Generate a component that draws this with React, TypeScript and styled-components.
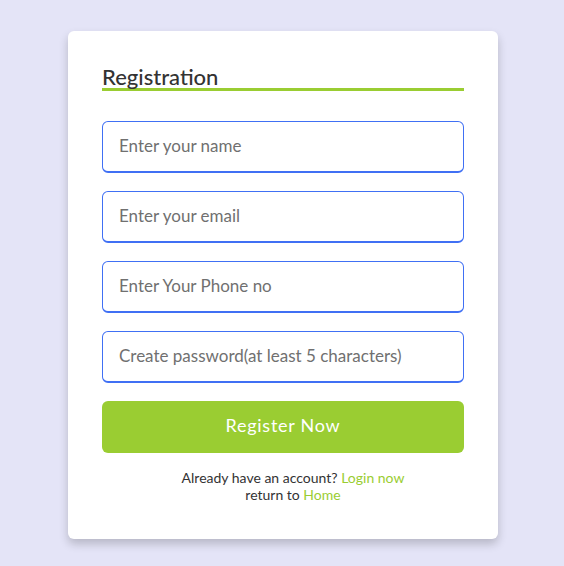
import React from "react";
import styled, { createGlobalStyle } from "styled-components";

const Global = createGlobalStyle`
  * { box-sizing: border-box; margin: 0; padding: 0; }
  html, body { background: #e4e4f7; }
  body { font-family: Lato, "Noto Sans", sans-serif; min-height: 566px; }
`;

const Page = styled.div`
  display: flex;
  justify-content: center;
  align-items: flex-start;
  padding-top: 31px;
  padding-left: 2px;
`;

const Card = styled.div`
  width: 430px;
  background: #fff;
  border-radius: 6px;
  padding: 34px 34px 36px;
  box-shadow: 0 5px 10px rgba(0, 0, 0, 0.2);
`;

const Title = styled.h2`
  font-size: 22px;
  font-weight: 500;
  color: #333;
  line-height: 22px;
  padding-top: 1px;
  border-bottom: 3px solid #9acd32;
  margin-bottom: 30px;
`;

const Form = styled.form`
  display: flex;
  flex-direction: column;
  gap: 18px;
`;

const Input = styled.input`
  height: 52px;
  width: 100%;
  border: 1px solid #4070f4;
  border-bottom-width: 2px;
  border-radius: 6px;
  padding: 0 16px 3px;
  font-family: Lato, sans-serif;
  font-size: 17px;
  color: #333;
  outline: none;
  &::placeholder { color: #707070; }
`;

const Button = styled.button`
  height: 52px;
  width: 100%;
  border: none;
  border-radius: 6px;
  background: #9acd32;
  color: #fff;
  font-family: Lato, sans-serif;
  font-size: 18px;
  letter-spacing: 0.75px;
  padding-bottom: 4px;
  cursor: pointer;
`;

const Footer = styled.div`
  margin-top: 16px;
  padding-left: 20px;
  text-align: center;
  font-size: 14px;
  line-height: 17px;
  color: #333;
`;

const Line = styled.p``;

const Link = styled.a`
  color: #9acd32;
  text-decoration: none;
`;

export default function App() {
  return (
    <>
      <Global />
      <Page>
        <Card>
          <Title>Registration</Title>
          <Form onSubmit={(e) => e.preventDefault()}>
            <Input type="text" placeholder="Enter your name" />
            <Input type="email" placeholder="Enter your email" />
            <Input type="text" placeholder="Enter Your Phone no" />
            <Input type="password" placeholder="Create password(at least 5 characters)" />
            <Button type="submit">Register Now</Button>
          </Form>
          <Footer>
            <Line>
              Already have an account? <Link href="#">Login now</Link>
            </Line>
            <Line>
              return to <Link href="#">Home</Link>
            </Line>
          </Footer>
        </Card>
      </Page>
    </>
  );
}
